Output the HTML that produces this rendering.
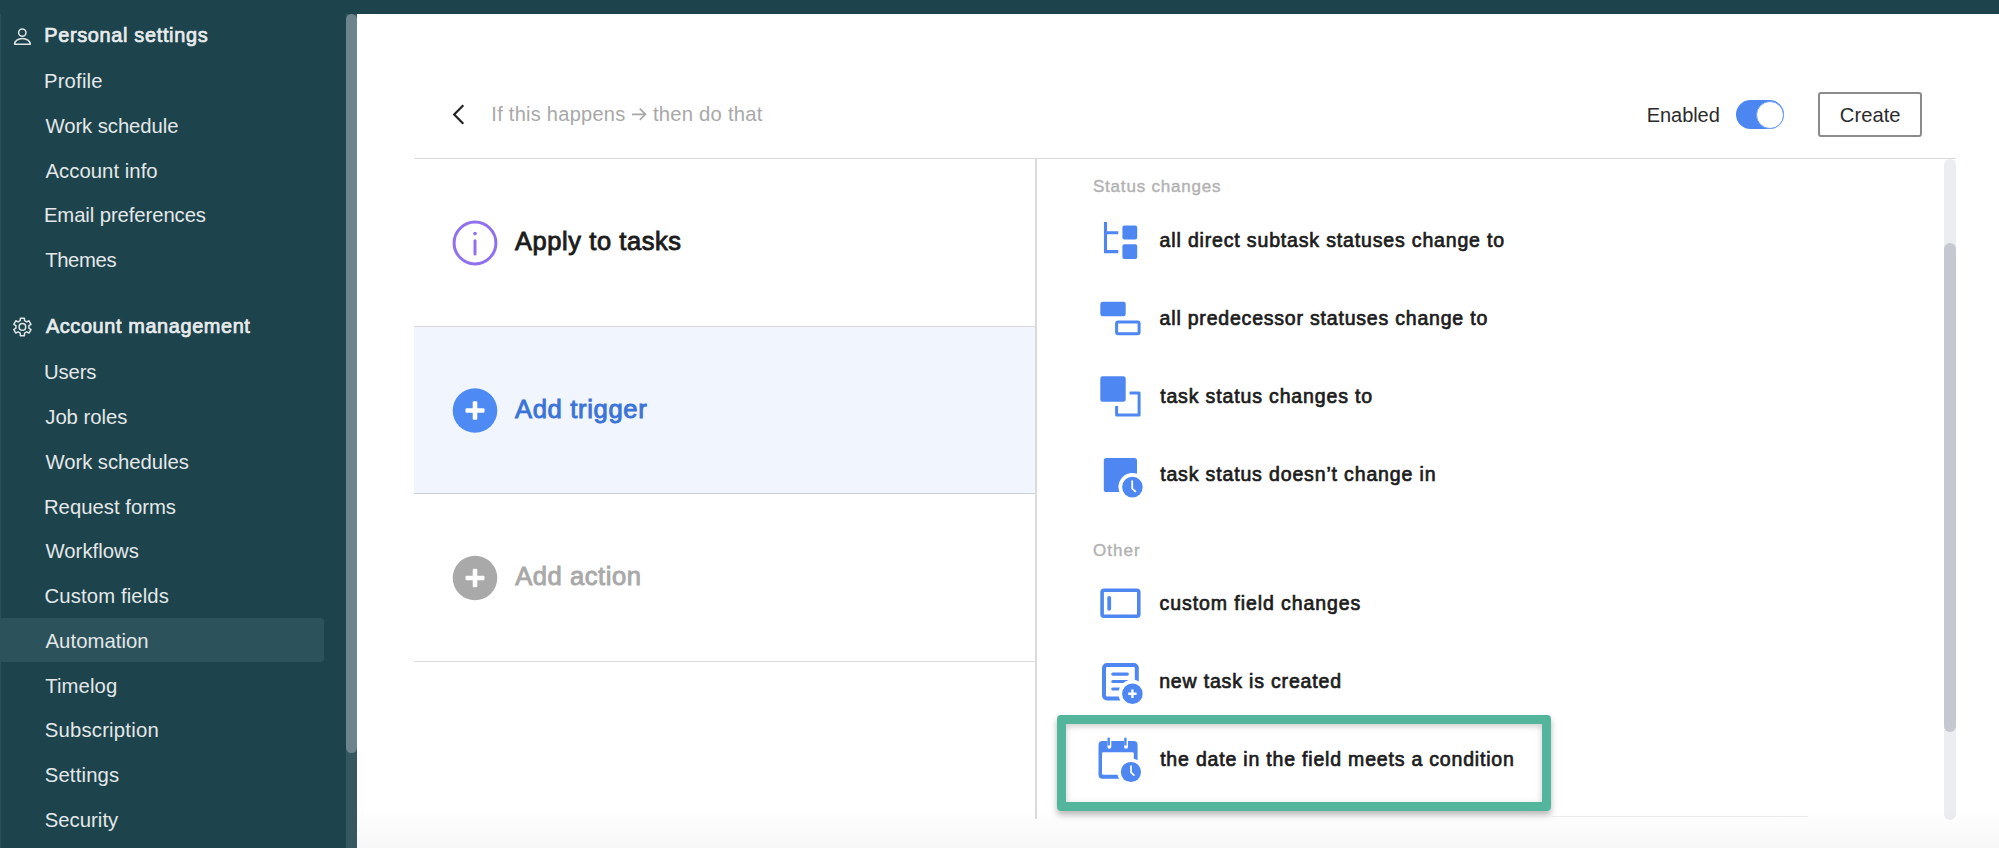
<!DOCTYPE html>
<html><head><meta charset="utf-8">
<style>
*{margin:0;padding:0;box-sizing:border-box}
html,body{width:1999px;height:849px;overflow:hidden;background:#fff;font-family:"Liberation Sans",sans-serif}
.a{position:absolute}
.t{position:absolute;white-space:nowrap;line-height:1}
#side{position:absolute;left:0;top:0;width:357px;height:848px;background:#1d434c}
#topbar{position:absolute;left:0;top:0;width:1999px;height:14px;background:#1d434c}
.sh{font-size:19.5px;font-weight:700;color:#e8ebec;left:45px}
.si{font-size:20.2px;color:#e3e7e8;left:45px}
.hl{position:absolute;left:0;top:618px;width:324px;height:44px;background:#2c525b;border-radius:0 4px 4px 0}
.line{position:absolute;background:#dcdcdc}
.lab{font-size:19.7px;font-weight:700;color:#1c1c1c;left:1160px}
.grp{font-size:17.2px;font-weight:700;color:#b4b4b4;left:1093px}
</style></head>
<body>
<div id="side">
  <div class="a" style="left:0;top:0;width:1px;height:848px;background:#2a5059"></div>
  <div class="hl"></div>
  <!-- person icon -->
  <svg class="a" style="left:0;top:20px" width="45" height="35" viewBox="0 20 45 35">
    <circle cx="22.3" cy="32.6" r="3.7" fill="none" stroke="#dfe4e5" stroke-width="1.5"/>
    <path d="M14.6 44.2 A7.7 5.6 0 0 1 30.2 44.2 Z" fill="none" stroke="#dfe4e5" stroke-width="1.6" stroke-linejoin="round"/>
  </svg>
  <!-- gear icon -->
  <svg class="a" style="left:0;top:300px" width="45" height="45" viewBox="0 300 45 45">
    <path d="M20.25 320.66 L20.38 318.13 L24.42 318.13 L24.55 320.66 L26.73 321.92 L28.98 320.76 L31.01 324.27 L28.88 325.64 L28.88 328.16 L31.01 329.53 L28.98 333.04 L26.73 331.88 L24.55 333.14 L24.42 335.67 L20.38 335.67 L20.25 333.14 L18.07 331.88 L15.82 333.04 L13.79 329.53 L15.92 328.16 L15.92 325.64 L13.79 324.27 L15.82 320.76 L18.07 321.92 Z" fill="none" stroke="#dfe4e5" stroke-width="1.5" stroke-linejoin="round"/>
    <circle cx="22.4" cy="326.9" r="3.3" fill="none" stroke="#dfe4e5" stroke-width="1.5"/>
  </svg>
  <!-- scrollbar -->
  <div class="a" style="left:346.2px;top:14px;width:10.8px;height:834px;background:#35575f"></div>
  <div class="a" style="left:346.2px;top:14px;width:10.8px;height:739px;background:#6e848c;border-radius:5.4px"></div>
</div>
<div id="topbar"></div>

<div id="main" class="a" style="left:357px;top:14px;width:1642px;height:835px;background:#fff"></div>
<!-- header -->
<svg class="a" style="left:450px;top:102px" width="18" height="24" viewBox="0 0 18 24">
  <path d="M13.3 3.3 L4.2 12.5 L13.3 21.7" fill="none" stroke="#222" stroke-width="2.2" stroke-linecap="butt" stroke-linejoin="miter"/>
</svg>
<svg class="a" style="left:630px;top:106px" width="18" height="16" viewBox="0 0 18 16"><path d="M2 8.3 H15.3 M9.8 2.6 L15.5 8.3 L9.8 14" fill="none" stroke="#a7a7a7" stroke-width="1.7"/></svg>
<div class="a" style="left:1736px;top:100px;width:48px;height:29px;border-radius:15px;background:#4c86f0"></div>
<div class="a" style="left:1756px;top:100.5px;width:28px;height:28px;border-radius:50%;background:#fff;border:1.6px solid #6b9ef6"></div>
<div class="a" style="left:1818px;top:92px;width:104px;height:45px;border:2px solid #8b8b8b;border-radius:3px"></div>
<div class="line" style="left:414px;top:158px;width:1542px;height:1px;background:#d9d9d9"></div>
<!-- left panel -->
<div class="a" style="left:414px;top:327px;width:621px;height:166px;background:#f0f5fe"></div>
<div class="line" style="left:414px;top:326px;width:621px;height:1px;background:#d6d8dd"></div>
<div class="line" style="left:414px;top:493px;width:621px;height:1px;background:#cfd1d8"></div>
<div class="line" style="left:414px;top:661px;width:621px;height:1px;background:#dcdcdc"></div>
<div class="line" style="left:1035px;top:159px;width:1.5px;height:660px;background:#dadada"></div>
<svg class="a" style="left:452px;top:220px" width="46" height="46" viewBox="0 0 46 46">
  <circle cx="23" cy="23" r="20.9" fill="none" stroke="#9170ee" stroke-width="3"/>
  <circle cx="23" cy="13.6" r="1.8" fill="#9170ee"/>
  <rect x="21.5" y="19.2" width="3" height="16.4" rx="1.5" fill="#9170ee"/>
</svg>
<svg class="a" style="left:452px;top:388px" width="46" height="46" viewBox="0 0 46 46">
  <circle cx="23" cy="22.5" r="22.3" fill="#4e8af3"/>
  <rect x="13.5" y="20.2" width="19" height="4.6" rx="1.2" fill="#fff"/>
  <rect x="20.7" y="13.2" width="4.6" height="18.6" rx="1.2" fill="#fff"/>
</svg>
<svg class="a" style="left:452px;top:555px" width="46" height="46" viewBox="0 0 46 46">
  <circle cx="23" cy="23" r="22.3" fill="#a9a9a9"/>
  <rect x="13.5" y="20.7" width="19" height="4.6" rx="1.2" fill="#fff"/>
  <rect x="20.7" y="13.7" width="4.6" height="18.6" rx="1.2" fill="#fff"/>
</svg>
<!-- right panel -->
<!-- icons -->
<svg class="a" style="left:1100px;top:220px" width="42" height="42" viewBox="1100 220 42 42">
  <path d="M1105.5 222 V251.6 H1118.3 M1105.5 232.8 H1118.3" fill="none" stroke="#4e87f1" stroke-width="3.1"/>
  <rect x="1122.4" y="225.4" width="14.8" height="14.2" rx="2" fill="#4e87f1"/>
  <rect x="1122.4" y="244.2" width="14.8" height="14.7" rx="2" fill="#4e87f1"/>
</svg>
<svg class="a" style="left:1095px;top:295px" width="50" height="45" viewBox="1095 295 50 45">
  <rect x="1100.3" y="301.7" width="25.4" height="14.5" rx="2.2" fill="#4e87f1"/>
  <rect x="1116.6" y="321.9" width="22.5" height="11.9" rx="1.5" fill="none" stroke="#4e87f1" stroke-width="3"/>
</svg>
<svg class="a" style="left:1095px;top:370px" width="50" height="50" viewBox="1095 370 50 50">
  <rect x="1100.3" y="376.3" width="25.4" height="25.5" rx="2.5" fill="#4e87f1"/>
  <path d="M1129.6 393 H1139.1 V415.1 H1116.6 V406" fill="none" stroke="#4e87f1" stroke-width="3" stroke-linejoin="round"/>
</svg>
<svg class="a" style="left:1095px;top:450px" width="50" height="50" viewBox="1095 450 50 50">
  <defs><mask id="m1"><rect x="1095" y="450" width="50" height="50" fill="#fff"/><circle cx="1132.4" cy="487.1" r="14" fill="#000"/></mask></defs>
  <rect x="1103.8" y="458.1" width="33.2" height="33.9" rx="2.6" fill="#4e87f1" mask="url(#m1)"/>
  <circle cx="1132.4" cy="487.1" r="10.3" fill="#4e87f1"/>
  <path d="M1132.2 481.2 V488.6 L1135.4 491.4" fill="none" stroke="#fff" stroke-width="1.8" stroke-linecap="round" stroke-linejoin="round"/>
</svg>
<svg class="a" style="left:1095px;top:580px" width="50" height="45" viewBox="1095 580 50 45">
  <rect x="1102.1" y="590.2" width="36.7" height="26.1" rx="2" fill="none" stroke="#4e87f1" stroke-width="3.6"/>
  <line x1="1109.2" y1="597.8" x2="1109.2" y2="608.8" stroke="#4e87f1" stroke-width="3.8" stroke-linecap="round"/>
</svg>
<svg class="a" style="left:1095px;top:655px" width="50" height="52" viewBox="1095 655 50 52">
  <defs><mask id="m2"><rect x="1095" y="655" width="50" height="52" fill="#fff"/><circle cx="1132.4" cy="693.7" r="14" fill="#000"/></mask></defs>
  <g mask="url(#m2)">
    <rect x="1104" y="665" width="32.8" height="33.4" rx="3" fill="none" stroke="#4e87f1" stroke-width="4"/>
    <path d="M1112.8 674.1 H1127.3 M1112.8 681.5 H1127.3 M1112.8 689 H1127.3" stroke="#4e87f1" stroke-width="3.2" stroke-linecap="round"/>
  </g>
  <circle cx="1132.4" cy="693.7" r="10.3" fill="#4e87f1"/>
  <path d="M1128.2 693.7 H1136.6 M1132.4 689.5 V697.9" stroke="#fff" stroke-width="2.4"/>
</svg>
<svg class="a" style="left:1095px;top:733px" width="50" height="52" viewBox="1095 733 50 52">
  <defs><mask id="m3"><rect x="1095" y="733" width="50" height="52" fill="#fff"/><circle cx="1130.9" cy="772" r="13.6" fill="#000"/>
    <path d="M1109.6 739 V746.6 A1.9 1.9 0 0 1 1107.7 748.5" fill="none" stroke="#000" stroke-width="0"/>
    <rect x="1107.4" y="739" width="3.9" height="9.7" rx="1.9" fill="#000"/>
    <rect x="1124.1" y="739" width="3.9" height="9.7" rx="1.9" fill="#000"/>
  </mask></defs>
  <g mask="url(#m3)">
    <path fill-rule="evenodd" fill="#4e87f1" d="M1102.5 741 H1133.6 A4 4 0 0 1 1137.6 745 V778.7 H1102.5 A4 4 0 0 1 1098.5 774.7 V745 A4 4 0 0 1 1102.5 741 Z M1103.4 752.3 A1.4 1.4 0 0 0 1102 753.7 V773.4 A1.4 1.4 0 0 0 1103.4 774.8 H1133.8 V753.7 A1.4 1.4 0 0 0 1132.4 752.3 Z"/>
  </g>
  <path d="M1107.5 745.4 V738.6 A1.1 1.1 0 0 1 1109.9 738.6 V745.4 Z" fill="#4e87f1"/>
  <path d="M1124.2 745.4 V738.6 A1.1 1.1 0 0 1 1126.6 738.6 V745.4 Z" fill="#4e87f1"/>
  <circle cx="1130.9" cy="772" r="10.1" fill="#4e87f1"/>
  <path d="M1131 766.2 V772.3 L1133.9 775.2" fill="none" stroke="#fff" stroke-width="1.7" stroke-linecap="round" stroke-linejoin="round"/>
</svg>
<!-- green highlight box -->
<div class="a" style="left:1057px;top:715px;width:494px;height:96px;border:9px solid #53b69c;border-radius:4px;box-shadow:0 4px 6px rgba(0,0,0,.28), inset 0 2px 6px rgba(0,0,0,.22)"></div>
<div class="line" style="left:1551px;top:816px;width:257px;height:1px;background:#ececec"></div>
<!-- scrollbar -->
<div class="a" style="left:1944px;top:159px;width:11.5px;height:661px;background:#ecedf0;border-radius:6px"></div>
<div class="a" style="left:1944px;top:243px;width:11.5px;height:489px;background:#c5c8d0;border-radius:6px"></div>
<!-- bottom fade -->
<div class="a" style="left:357px;top:808px;width:1642px;height:40px;background:linear-gradient(to bottom, rgba(0,0,0,0), rgba(0,0,0,.032))"></div>
<div class="t" style="left:44.23px;top:25.79px;font-size:19.9px;font-weight:400;color:#e9eced;letter-spacing:0.677px;-webkit-text-stroke:0.72px #e9eced">Personal settings</div>
<div class="t" style="left:43.93px;top:71.11px;font-size:20.3px;font-weight:400;color:#e4e8e9;letter-spacing:0.195px">Profile</div>
<div class="t" style="left:45.51px;top:115.86px;font-size:20.3px;font-weight:400;color:#e4e8e9;letter-spacing:-0.066px">Work schedule</div>
<div class="t" style="left:45.56px;top:160.61px;font-size:20.3px;font-weight:400;color:#e4e8e9;letter-spacing:0.042px">Account info</div>
<div class="t" style="left:43.93px;top:205.36px;font-size:20.3px;font-weight:400;color:#e4e8e9;letter-spacing:-0.085px">Email preferences</div>
<div class="t" style="left:45.14px;top:250.11px;font-size:20.3px;font-weight:400;color:#e4e8e9;letter-spacing:-0.355px">Themes</div>
<div class="t" style="left:45.92px;top:316.79px;font-size:19.9px;font-weight:400;color:#e9eced;letter-spacing:0.616px;-webkit-text-stroke:0.72px #e9eced">Account management</div>
<div class="t" style="left:44.03px;top:362.31px;font-size:20.3px;font-weight:400;color:#e4e8e9;letter-spacing:-0.117px">Users</div>
<div class="t" style="left:45.28px;top:407.06px;font-size:20.3px;font-weight:400;color:#e4e8e9;letter-spacing:-0.031px">Job roles</div>
<div class="t" style="left:45.51px;top:451.81px;font-size:20.3px;font-weight:400;color:#e4e8e9;letter-spacing:-0.046px">Work schedules</div>
<div class="t" style="left:43.93px;top:496.56px;font-size:20.3px;font-weight:400;color:#e4e8e9;letter-spacing:0.017px">Request forms</div>
<div class="t" style="left:45.51px;top:541.31px;font-size:20.3px;font-weight:400;color:#e4e8e9;letter-spacing:0.031px">Workflows</div>
<div class="t" style="left:44.57px;top:586.06px;font-size:20.3px;font-weight:400;color:#e4e8e9;letter-spacing:0.117px">Custom fields</div>
<div class="t" style="left:45.56px;top:630.81px;font-size:20.3px;font-weight:400;color:#e4e8e9;letter-spacing:0.050px">Automation</div>
<div class="t" style="left:45.14px;top:675.56px;font-size:20.3px;font-weight:400;color:#e4e8e9;letter-spacing:0.129px">Timelog</div>
<div class="t" style="left:44.68px;top:720.31px;font-size:20.3px;font-weight:400;color:#e4e8e9;letter-spacing:0.221px">Subscription</div>
<div class="t" style="left:44.68px;top:765.06px;font-size:20.3px;font-weight:400;color:#e4e8e9;letter-spacing:0.180px">Settings</div>
<div class="t" style="left:44.68px;top:809.81px;font-size:20.3px;font-weight:400;color:#e4e8e9;letter-spacing:0.042px">Security</div>
<div class="t" style="left:491.35px;top:104.47px;font-size:20.0px;font-weight:400;color:#a8a8a8;letter-spacing:0.270px">If this happens</div>
<div class="t" style="left:652.99px;top:104.11px;font-size:20.3px;font-weight:400;color:#a8a8a8;letter-spacing:0.201px">then do that</div>
<div class="t" style="left:1646.76px;top:104.87px;font-size:20.0px;font-weight:400;color:#2b2b2b;letter-spacing:-0.063px">Enabled</div>
<div class="t" style="left:1839.77px;top:104.50px;font-size:20.2px;font-weight:400;color:#2b2b2b;letter-spacing:0.046px">Create</div>
<div class="t" style="left:514.91px;top:229.44px;font-size:25.4px;font-weight:400;color:#1c1c1c;letter-spacing:0.623px;-webkit-text-stroke:0.91px #1c1c1c">Apply to tasks</div>
<div class="t" style="left:514.91px;top:396.86px;font-size:25.6px;font-weight:400;color:#3b74d8;letter-spacing:0.665px;-webkit-text-stroke:0.92px #3b74d8">Add trigger</div>
<div class="t" style="left:515.21px;top:564.46px;font-size:25.6px;font-weight:400;color:#a9a9a9;letter-spacing:0.527px;-webkit-text-stroke:0.92px #a9a9a9">Add action</div>
<div class="t" style="left:1092.94px;top:177.80px;font-size:17.0px;font-weight:400;color:#b2b2b2;letter-spacing:0.805px;-webkit-text-stroke:0.42px #b2b2b2">Status changes</div>
<div class="t" style="left:1092.90px;top:542.10px;font-size:17.0px;font-weight:400;color:#b2b2b2;letter-spacing:1.034px;-webkit-text-stroke:0.42px #b2b2b2">Other</div>
<div class="t" style="left:1159.62px;top:230.54px;font-size:19.5px;font-weight:400;color:#1c1c1c;letter-spacing:0.839px;-webkit-text-stroke:0.7px #1c1c1c">all direct subtask statuses change to</div>
<div class="t" style="left:1159.62px;top:308.84px;font-size:19.5px;font-weight:400;color:#1c1c1c;letter-spacing:0.797px;-webkit-text-stroke:0.7px #1c1c1c">all predecessor statuses change to</div>
<div class="t" style="left:1160.15px;top:387.14px;font-size:19.5px;font-weight:400;color:#1c1c1c;letter-spacing:0.856px;-webkit-text-stroke:0.7px #1c1c1c">task status changes to</div>
<div class="t" style="left:1160.15px;top:465.44px;font-size:19.5px;font-weight:400;color:#1c1c1c;letter-spacing:0.852px;-webkit-text-stroke:0.7px #1c1c1c">task status doesn’t change in</div>
<div class="t" style="left:1159.62px;top:593.74px;font-size:19.5px;font-weight:400;color:#1c1c1c;letter-spacing:0.923px;-webkit-text-stroke:0.7px #1c1c1c">custom field changes</div>
<div class="t" style="left:1159.16px;top:672.04px;font-size:19.5px;font-weight:400;color:#1c1c1c;letter-spacing:0.829px;-webkit-text-stroke:0.7px #1c1c1c">new task is created</div>
<div class="t" style="left:1160.15px;top:750.34px;font-size:19.5px;font-weight:400;color:#1c1c1c;letter-spacing:0.806px;-webkit-text-stroke:0.7px #1c1c1c">the date in the field meets a condition</div>
</body></html>
